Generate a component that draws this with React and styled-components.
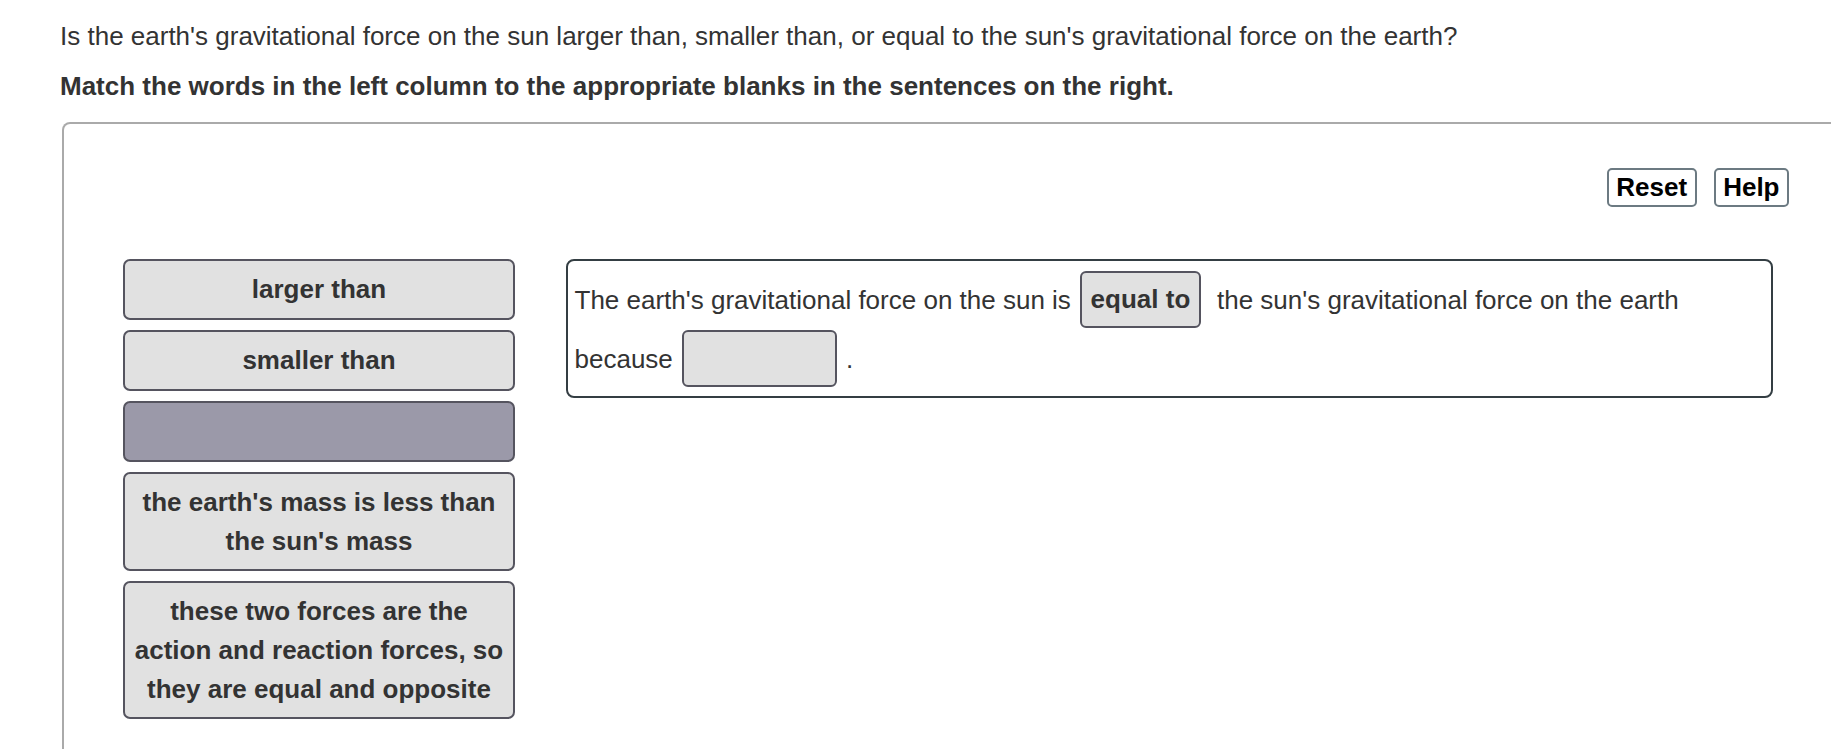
import React from "react";
import styled, { createGlobalStyle } from "styled-components";

const GlobalStyle = createGlobalStyle`
  html, body {
    margin: 0;
    padding: 0;
    overflow: hidden;
    background: #fff;
  }
  body {
    font-family: "Liberation Sans", Arial, Helvetica, sans-serif;
    color: #333;
  }
`;

const Page = styled.div`
  padding-left: 60px;
  width: 1831px;
  box-sizing: border-box;
`;

const Question = styled.p`
  margin: 17px 0 0;
  font-size: 26px;
  line-height: 38px;
`;

const Instruction = styled(Question)`
  margin-top: 12px;
  font-weight: bold;
`;

const Panel = styled.div`
  margin: 17px 0 0 2px;
  width: 1800px;
  min-height: 700px;
  box-sizing: border-box;
  border: 2px solid #aaa;
  border-bottom: none;
  border-radius: 8px 8px 0 0;
  padding: 44px 71px 0 59px;
`;

const Toolbar = styled.div`
  display: flex;
  justify-content: flex-end;
  gap: 17px;
`;

const ToolButton = styled.button`
  font-family: inherit;
  font-size: 26px;
  font-weight: bold;
  line-height: 35px;
  color: #000;
  background: #fff;
  border: 2px solid #6c7a82;
  border-radius: 5px;
  padding: 0 7.5px;
  margin: 0;
  cursor: pointer;
`;

const Workspace = styled.div`
  display: flex;
  align-items: flex-start;
  gap: 51px;
  margin-top: 52px;
`;

const WordColumn = styled.div`
  display: flex;
  flex-direction: column;
  gap: 10px;
  width: 392px;
  flex-shrink: 0;
`;

const WordTile = styled.div`
  box-sizing: border-box;
  min-height: 61px;
  padding: 8.5px 8px;
  border: 2.5px solid #55545f;
  border-radius: 7px;
  background: ${(p) => (p.$empty ? "#9b99a9" : "#e1e1e1")};
  font-size: 26px;
  font-weight: bold;
  line-height: 39px;
  text-align: center;
  color: #333;
`;

const SentenceBox = styled.div`
  width: 1207px;
  flex-shrink: 0;
  box-sizing: border-box;
  border: 2.5px solid #343e43;
  border-radius: 8px;
  padding: 9.5px 8px 7.5px 6.5px;
  font-size: 26px;
  line-height: 38px;
  color: #333;
`;

const DropZone = styled.span`
  display: inline-block;
  box-sizing: border-box;
  min-width: ${(p) => (p.$filled ? "0" : "155px")};
  padding: 7.5px 8.5px;
  margin: 0 9px 2px 2px;
  border: 2.5px solid #55545f;
  border-radius: 6px;
  background: #e1e1e1;
  font-weight: bold;
  line-height: 38px;
  color: #333;
`;

const words = [
  { id: "larger", text: "larger than" },
  { id: "smaller", text: "smaller than" },
  { id: "equal", text: "", empty: true },
  { id: "mass", text: "the earth's mass is less than the sun's mass" },
  {
    id: "forces",
    text: "these two forces are the action and reaction forces, so they are equal and opposite",
  },
];

const App = () => {
  return (
    <>
      <GlobalStyle />
      <Page>
        <Question>
          Is the earth's gravitational force on the sun larger than, smaller
          than, or equal to the sun's gravitational force on the earth?
        </Question>
        <Instruction>
          Match the words in the left column to the appropriate blanks in the
          sentences on the right.
        </Instruction>
        <Panel>
          <Toolbar>
            <ToolButton>Reset</ToolButton>
            <ToolButton>Help</ToolButton>
          </Toolbar>
          <Workspace>
            <WordColumn>
              {words.map((w) => (
                <WordTile key={w.id} $empty={w.empty}>
                  {w.text}
                </WordTile>
              ))}
            </WordColumn>
            <SentenceBox>
              The earth's gravitational force on the sun is{" "}
              <DropZone $filled>equal to</DropZone> the sun's gravitational
              force on the earth because <DropZone>{"\u00a0"}</DropZone>.
            </SentenceBox>
          </Workspace>
        </Panel>
      </Page>
    </>
  );
};

export default App;
